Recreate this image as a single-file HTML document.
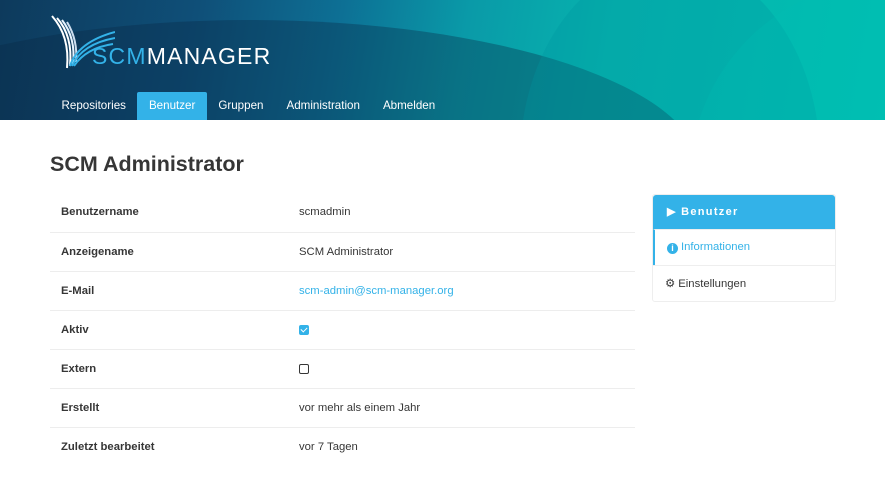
<!DOCTYPE html>
<html><head><meta charset="utf-8"><style>
*{margin:0;padding:0;box-sizing:border-box}
body{width:885px;height:493px;overflow:hidden;background:#fff;font-family:"Liberation Sans",sans-serif;color:#363636;font-size:11.3px;position:relative}
.hdr{position:absolute;left:0;top:0;width:885px;height:120px;background:linear-gradient(100deg,#0d3a5c 0%,#0f4f78 22%,#0d7095 38%,#0a9aa8 52%,#06b3ae 68%,#00c0b2 100%);overflow:hidden}
.hdr .sh{position:absolute;border-radius:50%}
.logo{position:absolute;left:92px;top:43px;font-size:23px;letter-spacing:1.2px;color:#fff;font-weight:normal}
.logo b{color:#33b2e8;font-weight:normal}
.nav{position:absolute;top:92px;left:50px;height:28px;display:flex}
.nav a{color:#fff;font-size:11.6px;padding:0 11.5px;line-height:28px;text-decoration:none}
.nav a.act{background:#33b2e8;border-radius:2px 2px 0 0}
h1{position:absolute;left:50px;top:152px;font-size:21.5px;font-weight:bold;color:#363636}
table{position:absolute;left:50px;top:193px;width:585px;border-collapse:collapse}
td{height:39px;border-bottom:1px solid #ededed;padding-left:11px;vertical-align:middle}
td:first-child{font-weight:bold;width:238px}
a.m{color:#33b2e8;text-decoration:none}
.cb{display:inline-block;width:10px;height:10px;border:1.5px solid #363636;border-radius:2px;vertical-align:middle;position:relative}
.cb.on{background:#33b2e8;border-color:#33b2e8}
.cb.on:after{content:"";position:absolute;left:2px;top:0px;width:3px;height:5px;border:solid #fff;border-width:0 1.5px 1.5px 0;transform:rotate(45deg)}
.side{position:absolute;left:652px;top:194px;width:184px;border:1px solid #eee;border-radius:3px}
.side .h{background:#33b2e8;color:#fff;font-weight:bold;letter-spacing:1.3px;height:34px;line-height:34px;padding-left:14px;border-radius:3px 3px 0 0;font-size:11px}
.side .i{height:36px;line-height:36px;padding-left:12px;border-top:1px solid #eee}
.side .i1{color:#33b2e8;border-left:2px solid #33b2e8;padding-left:12px;line-height:34px}
.ic{display:inline-block;width:11px;height:11px;border-radius:50%;background:#33b2e8;color:#fff;font-size:9px;line-height:11px;text-align:center;font-weight:bold;vertical-align:-1px;margin-right:3px}
</style></head><body>
<div class="hdr">
<div class="sh" style="left:-200px;top:20px;width:900px;height:300px;background:rgba(10,40,70,.35)"></div>
<div class="sh" style="left:520px;top:-40px;width:300px;height:400px;background:rgba(0,150,160,.3)"></div>
<div class="sh" style="left:690px;top:-20px;width:400px;height:400px;background:rgba(0,190,180,.3)"></div>
<svg style="position:absolute;left:50px;top:14px" width="65" height="56" viewBox="0 0 65 56"><g fill="none" stroke-width="2"><path d="M2 2 Q20 22 17 54" stroke="#fff"/><path d="M7 4 Q23 22 20 52" stroke="#fff"/><path d="M12 6 Q26 24 23 50" stroke="#e8f4ff"/><path d="M17 8 Q28 26 26 48" stroke="#cde"/><path d="M20 52 Q28 28 65 18" stroke="#33b2e8"/><path d="M22 52 Q32 30 65 24" stroke="#33b2e8"/><path d="M24 52 Q36 34 63 30" stroke="#33b2e8"/></g></svg>
<div class="logo"><b>SCM</b>MANAGER</div>
<div class="nav"><a>Repositories</a><a class="act">Benutzer</a><a>Gruppen</a><a>Administration</a><a>Abmelden</a></div>
</div>
<h1>SCM Administrator</h1>
<table>
<tr><td>Benutzername</td><td>scmadmin</td></tr>
<tr><td>Anzeigename</td><td>SCM Administrator</td></tr>
<tr><td>E-Mail</td><td><a class="m">scm-admin@scm-manager.org</a></td></tr>
<tr><td>Aktiv</td><td><span class="cb on"></span></td></tr>
<tr><td>Extern</td><td><span class="cb"></span></td></tr>
<tr><td>Erstellt</td><td>vor mehr als einem Jahr</td></tr>
<tr><td style="border:none">Zuletzt bearbeitet</td><td style="border:none">vor 7 Tagen</td></tr>
</table>
<div class="side">
<div class="h">▶ Benutzer</div>
<div class="i i1"><span class="ic">i</span>Informationen</div>
<div class="i">⚙ Einstellungen</div>
</div>
</body></html>
